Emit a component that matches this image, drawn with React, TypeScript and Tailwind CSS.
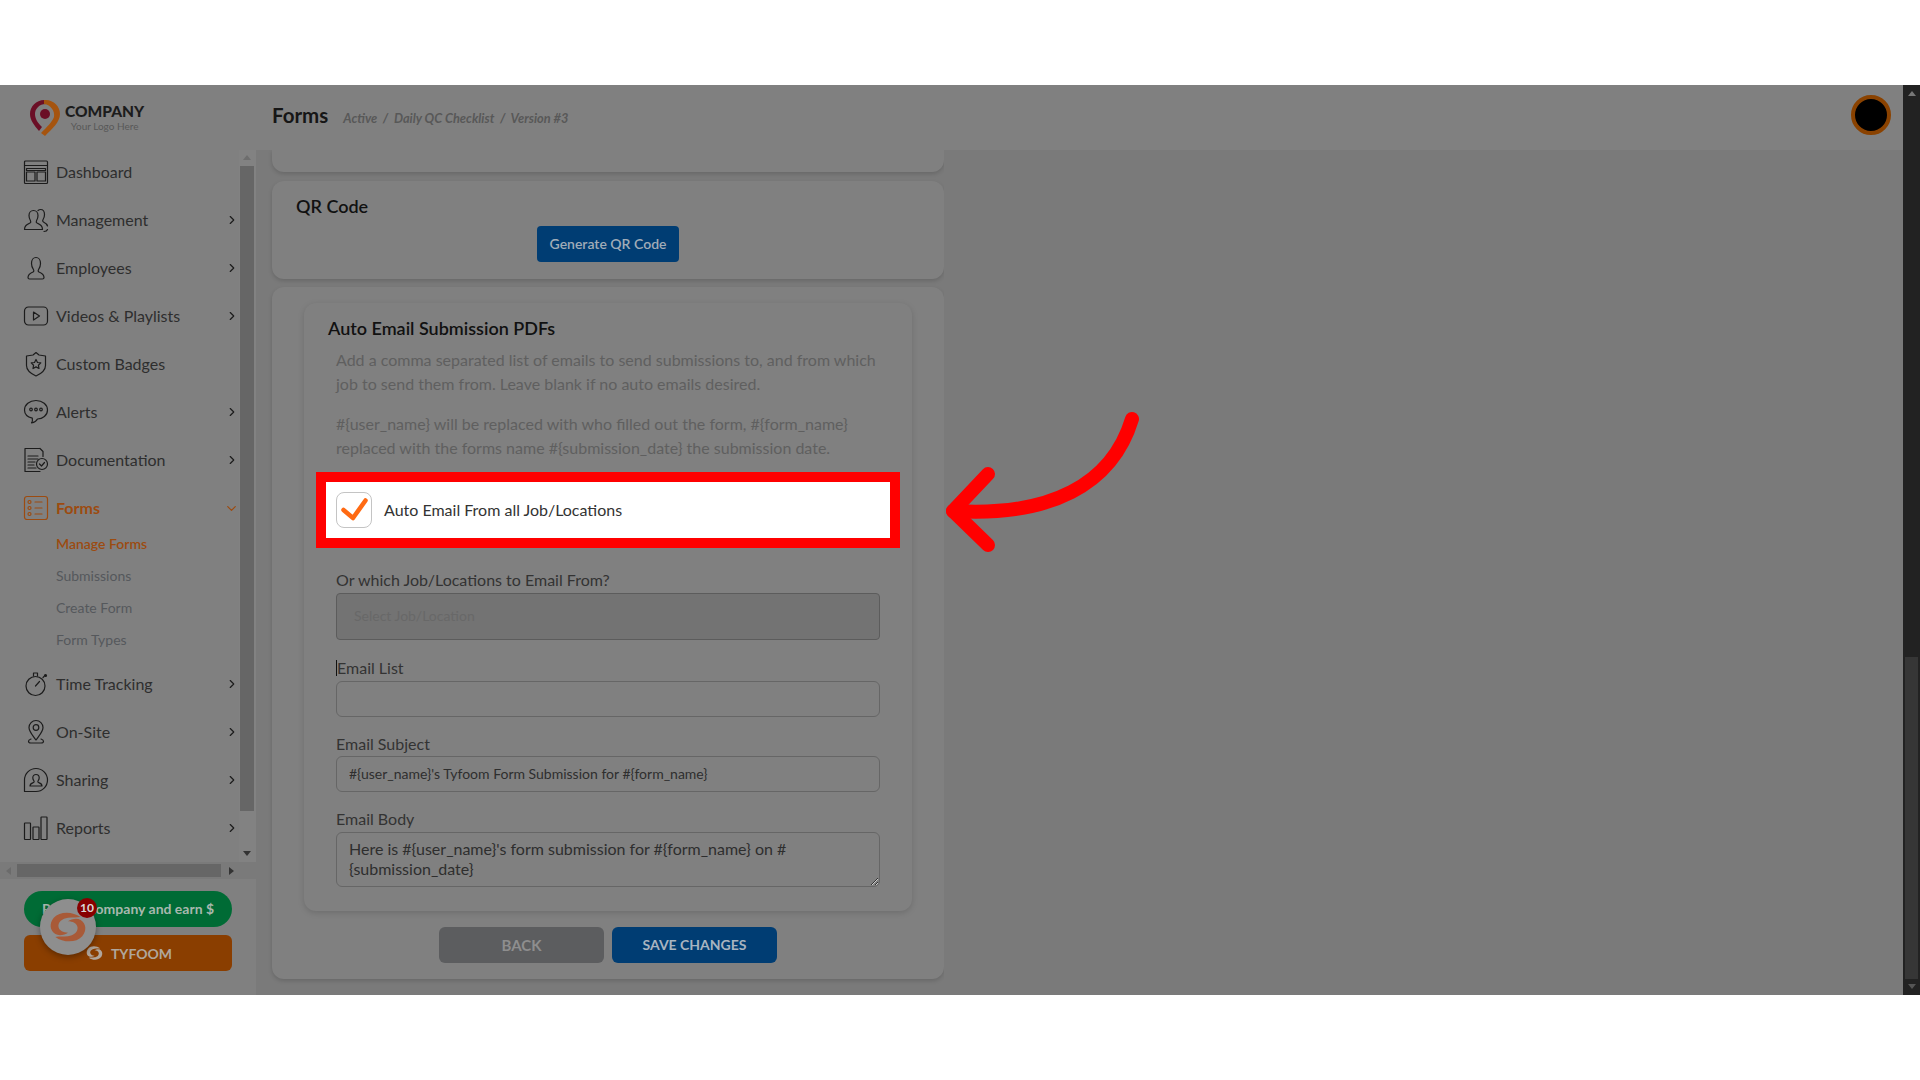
import { ChevronDown, ChevronRight } from 'lucide-react'

const iconProps = {
  width: 26,
  height: 26,
  viewBox: '0 0 26 26',
  fill: 'none',
  stroke: 'currentColor',
  strokeWidth: 1.2,
  strokeLinecap: 'round' as const,
  strokeLinejoin: 'round' as const,
}

const DashboardIcon = () => (
  <svg {...iconProps}>
    <rect x="1.5" y="2" width="23" height="22.5" rx="1" />
    <path d="M1.5 6.5h23M3.5 9.5h19v2h-19zM3.5 13h8.5v9h-8.5zM14 13h8.5v9H14z" />
  </svg>
)
const ManagementIcon = () => (
  <svg {...iconProps}>
    <path d="M1.5 22.5c0-4 2.5-5 5.5-6.500 1-.6 1-1.500.4-2.500-1-1.500-1.400-3-1.400-5 0-3 2-5 4.500-5s4.500 2 4.500 5c0 2-.4 3.500-1.400 5-.6 1-.6 1.900.4 2.500 3 1.500 5.500 2.500 5.500 6.500z" />
    <path d="M15 3.500c.8-.6 1.600-1 2.500-1 2.500 0 4 2 4 5 0 2-.4 3.500-1.400 5-.6 1-.6 1.900.4 2.500 2 1 3.500 2 4 4M21 24.500c1.500 0 3-.5 3.500-2" />
  </svg>
)
const EmployeeIcon = () => (
  <svg {...iconProps}>
    <path d="M6.500 24c-1 0-1.500-.5-1.500-1.500 0-3.500 2.500-4.500 5-5.500 1-.5 1-1.500.4-2.500-1-1.500-1.900-3.500-1.900-6 0-3.500 2-6 4.500-6s4.500 2.500 4.500 6c0 2.500-.9 4.500-1.900 6-.6 1-.6 2 .4 2.500 2.500 1 5 2 5 5.500 0 1-.5 1.500-1.500 1.500z" />
  </svg>
)
const VideoIcon = () => (
  <svg {...iconProps}>
    <rect x="1.500" y="4" width="23" height="18" rx="4" />
    <path d="M10.500 9l6 4-6 4z" />
  </svg>
)
const BadgeIcon = () => (
  <svg {...iconProps}>
    <path d="M13 1.500l3 2.500 6.500 1v9.500c0 4.500-4 8-9.500 10.500-5.500-2.500-9.500-6-9.500-10.500V5L10 4z" />
    <path d="M13 8.500l1.500 3 3.300.4-2.400 2.300.6 3.300-3-1.600-3 1.600.6-3.300-2.400-2.300 3.300-.4z" />
  </svg>
)
const AlertIcon = () => (
  <svg {...iconProps}>
    <path d="M13 1.500c6.500 0 11.500 4 11.500 9.500S19.500 20 14.500 20c-1 2-3.500 3.500-6 4 1-1.500 1.200-3 .8-4.800C4.500 18 1.500 15 1.500 11 1.500 5.500 6.500 1.500 13 1.500z" />
    <circle cx="8" cy="10.500" r="1.300" />
    <circle cx="13" cy="10.500" r="1.300" />
    <circle cx="18" cy="10.500" r="1.300" />
  </svg>
)
const DocIcon = () => (
  <svg {...iconProps}>
    <path d="M17 1.500H2v23h15M17 1.500l3 3v5M5 9h10M5 12h10M5 15h7M5 18h6M5 21h8" />
    <circle cx="19" cy="17" r="5.500" />
    <path d="M16.500 17l2 2 3-3.500" />
  </svg>
)
const FormsIcon = () => (
  <svg {...iconProps}>
    <rect x="1.500" y="1.500" width="23" height="23" rx="2.500" />
    <circle cx="6.500" cy="7" r="1.500" />
    <circle cx="6.500" cy="13" r="1.500" />
    <circle cx="6.500" cy="19" r="1.500" />
    <path d="M12 7h7M12 13h7M12 19h7" />
  </svg>
)
const TimeIcon = () => (
  <svg {...iconProps}>
    <circle cx="12.500" cy="15" r="9.500" />
    <path d="M12.500 15l4-4.500M10.500 5V2h4v3M20 6.500l1-1" />
    <circle cx="22.500" cy="4.500" r="1" fill="currentColor" />
  </svg>
)
const PinIcon = () => (
  <svg {...iconProps}>
    <path d="M13 21C9 15.500 6 12.500 6 8.500a7 7 0 0114 0c0 4-3 7-7 12.500z" />
    <circle cx="13" cy="8.500" r="2.800" />
    <path d="M8 20c-1.500.5-2.500 1.200-2.500 2.200 0 1 1 1.800 2.500 1.800h10c1.500 0 2.500-.8 2.500-1.800 0-1-1-1.700-2.500-2.200" />
  </svg>
)
const ShareIcon = () => (
  <svg {...iconProps}>
    <path d="M1.500 24.500V13a11.500 11.500 0 1111.500 11.500z" />
    <path d="M7 19c0-2.500 2-3 3.500-3.500.8-.4.8-1 .3-1.800-.6-.9-1-1.800-1-3 0-2 1.400-3.200 3.200-3.200s3.200 1.200 3.200 3.200c0 1.200-.4 2.100-1 3-.5.8-.5 1.400.3 1.800C17 16 19 16.500 19 19z" />
  </svg>
)
const ReportsIcon = () => (
  <svg {...iconProps}>
    <rect x="1.500" y="8" width="6" height="16.500" rx=".5" />
    <rect x="10" y="12" width="6" height="12.500" rx=".5" />
    <rect x="18" y="2" width="6" height="22.500" rx=".5" />
  </svg>
)

// two crescents, the second one is the first turned half way round
const Swirl = ({ width, height, color }: { width: number; height: number; color: string }) => {
  const blade = 'M40 10C30 2 14 1 6 11 0 19 1 29 8 34c5 3 12 1 16-2-6 0-11-3-12-8-1-7 5-12 12-13 6-1 11 0 16-1z'
  return (
    <svg width={width} height={height} viewBox="0 0 48 48" preserveAspectRatio="none" fill={color}>
      <path d={blade} />
      <path d={blade} transform="rotate(180 24 24)" />
    </svg>
  )
}

const navTop = [
  { label: 'Dashboard', icon: <DashboardIcon />, arrow: false },
  { label: 'Management', icon: <ManagementIcon />, arrow: true },
  { label: 'Employees', icon: <EmployeeIcon />, arrow: true },
  { label: 'Videos & Playlists', icon: <VideoIcon />, arrow: true },
  { label: 'Custom Badges', icon: <BadgeIcon />, arrow: false },
  { label: 'Alerts', icon: <AlertIcon />, arrow: true },
  { label: 'Documentation', icon: <DocIcon />, arrow: true },
]

const navBottom = [
  { label: 'Time Tracking', icon: <TimeIcon /> },
  { label: 'On-Site', icon: <PinIcon /> },
  { label: 'Sharing', icon: <ShareIcon /> },
  { label: 'Reports', icon: <ReportsIcon /> },
]

function NavItem({ label, icon, arrow }: { label: string; icon: React.ReactNode; arrow: boolean }) {
  return (
    <div className="flex h-12 items-center pl-[23px] text-[#2e2e2e]">
      <span className="flex w-[33px] shrink-0 text-[#1c1c1c]">{icon}</span>
      <span className="flex-1 text-[16px]">{label}</span>
      {arrow && <ChevronRight size={14} strokeWidth={2} className="text-[#1c1c1c]" />}
    </div>
  )
}

function Sidebar() {
  return (
    <aside className="flex h-full w-[256px] shrink-0 flex-col bg-[#808080]">
      {/* Logo */}
      <div className="flex h-[65px] items-center pl-[29px]">
        <svg width="32" height="38" viewBox="0 0 32 38" fill="none">
          <path d="M17 1C8 0 1 7 1 15c0 6 4 11 9 17l3-4C9 24 6 20 6 15 6 10 10 5 17 5z" fill="#6b0f26" />
          <path d="M15 1c9-1 16 6 16 14 0 8-8 15-15 22l-4-3c6-6 11-11 13-16 1-6-3-12-10-13z" fill="#a5540f" />
          <circle cx="16" cy="15" r="5" fill="#6b0f26" />
        </svg>
        <div className="ml-[4px] flex flex-col items-center leading-none">
          <span className="text-[15.5px] font-black text-[#1c1c1c]">COMPANY</span>
          <span className="mt-[1px] text-[10px] text-[#585858]">Your Logo Here</span>
        </div>
      </div>

      {/* Nav */}
      <div className="flex h-[712px] overflow-hidden">
        <nav className="-mt-0.5 w-[239px] shrink-0">
          {navTop.map((item) => (
            <NavItem key={item.label} {...item} />
          ))}
          <div className="flex h-12 items-center pl-[23px] text-[#9c4b10]">
            <span className="flex w-[33px] shrink-0">
              <FormsIcon />
            </span>
            <span className="flex-1 text-[16px] font-bold">Forms</span>
            <ChevronDown size={15} strokeWidth={2} />
          </div>
          <div className="-mt-[5px] mb-[5px] pl-[56px] text-[14px] text-[#55585c]">
            <div className="flex h-8 items-center font-semibold text-[#9c4b10]">Manage Forms</div>
            <div className="flex h-8 items-center">Submissions</div>
            <div className="flex h-8 items-center">Create Form</div>
            <div className="flex h-8 items-center">Form Types</div>
          </div>
          {navBottom.map((item) => (
            <NavItem key={item.label} {...item} arrow />
          ))}
        </nav>
        <div className="flex w-[17px] flex-col items-center bg-[#828282] pr-[1px]">
          <span className="mt-[5px] h-0 w-0 border-x-[4px] border-b-[5px] border-x-transparent border-b-[#6e6e6e]" />
          <div className="mt-[6px] h-[645px] w-[14px] bg-[#666666]" />
          <span className="mt-[40px] h-0 w-0 border-x-[4px] border-t-[5px] border-x-transparent border-t-[#333333]" />
        </div>
      </div>

      {/* Horizontal scrollbar */}
      <div className="flex h-[17px] items-center bg-[#7a7a7a]">
        <span className="ml-[6px] h-0 w-0 border-y-[4px] border-r-[5px] border-y-transparent border-r-[#6b6b6b]" />
        <div className="ml-[6px] h-[13px] w-[204px] bg-[#666666]" />
        <span className="ml-[8px] h-0 w-0 border-y-[4px] border-l-[5px] border-y-transparent border-l-[#333333]" />
      </div>

      {/* Bottom buttons */}
      <div className="flex flex-col gap-2 px-6 pt-3">
        <div className="flex h-9 items-center justify-center rounded-full bg-[#006b35] pb-[2px] text-[14px] font-bold text-[#a8b8ae]">
          Refer a company and earn $
        </div>
        <div className="flex h-9 items-center justify-center gap-2 rounded-md bg-[#8a3e00] pl-[2px] text-[14px] font-bold text-[#b0a69c]">
          <Swirl width={17} height={16} color="#b0a69c" />
          TYFOOM
        </div>
      </div>
    </aside>
  )
}

function Field({ label, children }: { label: React.ReactNode; children: React.ReactNode }) {
  return (
    <div className="flex flex-col gap-[1px]">
      <label className="flex h-[24px] items-center text-[16px] leading-none text-[#333333]">{label}</label>
      {children}
    </div>
  )
}

function MainContent() {
  return (
    <main className="h-[845px] w-[688px] shrink-0 overflow-hidden pl-4">
      <div className="h-[22px] w-[672px] rounded-b-xl bg-[#808080] shadow-[0_2px_4px_rgba(0,0,0,0.15)]" />

      <section className="mt-[9px] h-[98px] w-[672px] rounded-xl bg-[#808080] pl-6 pt-[12px] shadow-[0_2px_4px_rgba(0,0,0,0.15)]">
        <h2 className="text-[18px] font-semibold leading-[26px] text-[#111111]">QR Code</h2>
        <div className="mt-[7px] flex justify-center pr-6">
          <button className="h-9 w-[142px] rounded bg-[#003d73] pb-[2px] text-[14px] font-semibold text-[#a0acb8]">
            Generate QR Code
          </button>
        </div>
      </section>

      <section className="mt-2 h-[692px] w-[672px] rounded-xl bg-[#808080] px-8 pt-4 shadow-[0_2px_4px_rgba(0,0,0,0.15)]">
        <div className="h-[608px] rounded-xl bg-[#808080] px-8 shadow-[0_2px_6px_rgba(0,0,0,0.15)]">
          <h3 className="-ml-2 pt-[12px] text-[18px] font-semibold leading-[26px] text-[#111111]">
            Auto Email Submission PDFs
          </h3>
          <p className="mt-[7px] w-[544px] text-[16px] leading-6 text-[#5f5f5f]">
            Add a comma separated list of emails to send submissions to, and from which job to send them from. Leave blank if no auto emails desired.
          </p>
          <p className="mt-4 w-[544px] text-[16px] leading-6 text-[#5f5f5f]">
            {'#{user_name} will be replaced with who filled out the form, #{form_name} replaced with the forms name #{submission_date} the submission date.'}
          </p>

          <div className="mt-[108px] flex flex-col gap-4">
            <Field label="Or which Job/Locations to Email From?">
              <div className="flex h-[47px] items-center rounded border border-[#5c5c5c] bg-[#737373] pb-[2px] pl-[17px] text-[14px] text-[#686868]">
                Select Job/Location
              </div>
            </Field>
            <div className="flex flex-col gap-[15px]">
              <Field
                label={
                  <>
                    <span className="h-[16px] w-px bg-[#111111]" />
                    Email List
                  </>
                }
              >
                <input readOnly className="h-[36px] rounded-md border border-[#666666] bg-transparent px-3 outline-none" />
              </Field>
              <Field label="Email Subject">
                <input
                  readOnly
                  value="#{user_name}'s Tyfoom Form Submission for #{form_name}"
                  className="-mt-[1px] h-[36px] rounded-md border border-[#666666] bg-transparent px-3 pb-[2px] text-[14px] text-[#2e2e2e] outline-none"
                />
              </Field>
              <Field label="Email Body">
                <textarea
                  readOnly
                  value="Here is #{user_name}'s form submission for #{form_name} on #{submission_date}"
                  className="h-[55px] rounded-md border border-[#666666] bg-transparent px-3 pt-[6px] text-[16px] leading-[20px] text-[#2e2e2e] outline-none"
                />
              </Field>
            </div>
          </div>
        </div>

        <div className="mt-4 flex justify-center gap-2">
          <button className="h-9 w-[165px] rounded-md bg-[#5c5d5f] text-[15px] font-bold text-[#8e8e8e]">BACK</button>
          <button className="h-9 w-[165px] rounded-md bg-[#003d73] pb-[2px] text-[14px] font-bold text-[#a8b4c0]">SAVE CHANGES</button>
        </div>
      </section>
    </main>
  )
}

export default function App() {
  return (
    <div className="relative flex h-[1080px] w-[1920px] flex-col overflow-hidden bg-white font-['Lato',sans-serif]">
      <div className="h-[85px] shrink-0" />
      <div className="flex h-[910px] shrink-0">
        <Sidebar />
        <div className="flex min-w-0 flex-1 flex-col bg-[#7a7a7a]">
          {/* Header */}
          <header className="flex h-[65px] shrink-0 items-center bg-[#808080] pb-[5px] pl-4 pr-[12px]">
            <h1 className="text-[20.5px] font-bold text-[#161616]">Forms</h1>
            <span className="ml-[15px] mt-[8px] text-[12.8px] font-bold italic text-[#585858]">
              Active&nbsp; /&nbsp; Daily QC Checklist&nbsp; /&nbsp; Version #3
            </span>
            <div className="ml-auto h-10 w-10 rounded-full border-4 border-[#8a4200] bg-black" />
          </header>
          <MainContent />
        </div>
        {/* Page scrollbar */}
        <div className="flex w-[17px] shrink-0 flex-col items-center bg-[#222222]">
          <span className="mt-[6px] h-0 w-0 border-x-[4px] border-b-[5px] border-x-transparent border-b-[#777777]" />
          <div className="mt-[561px] h-[322px] w-[13px] bg-[#363636]" />
          <span className="mt-[5px] h-0 w-0 border-x-[4px] border-t-[5px] border-x-transparent border-t-[#555555]" />
        </div>
      </div>

      {/* Highlight box around the checkbox */}
      <div className="absolute left-[316px] top-[472px] flex h-[76px] w-[584px] items-center border-[10px] border-[#ff0000] bg-white pl-[10px]">
        <span className="flex h-9 w-9 items-center justify-center rounded-lg border border-[#c4c4c4] bg-white">
          <svg width="28" height="26" viewBox="0 0 28 26" fill="none" stroke="#ff6a13" strokeWidth="4.5" strokeLinecap="round" strokeLinejoin="round">
            <path d="M3.500 13L13 21 25.500 3.500" />
          </svg>
        </span>
        <span className="ml-3 text-[16px] text-[#333333]">Auto Email From all Job/Locations</span>
      </div>

      {/* Callout arrow */}
      <svg className="absolute left-[930px] top-[390px]" width="240" height="180" viewBox="0 0 240 180" fill="none" stroke="#ff0000" strokeWidth="14" strokeLinecap="round" strokeLinejoin="round">
        <path d="M202 29C182 95 120 127 23 121" />
        <path d="M58 84L23 121L58 155" />
      </svg>

      {/* Tyfoom chat widget */}
      <div className="absolute left-[40px] top-[899px] flex h-14 w-14 items-center justify-center rounded-full bg-[#8e8e8e] shadow-[0_2px_6px_rgba(0,0,0,0.35)]">
        <Swirl width={38} height={34} color="#a85a38" />
        <span className="absolute -right-[1px] -top-[1px] flex h-5 w-5 items-center justify-center rounded-full bg-[#870000] text-[12px] font-bold text-[#d8d8d8]">
          10
        </span>
      </div>
    </div>
  )
}
